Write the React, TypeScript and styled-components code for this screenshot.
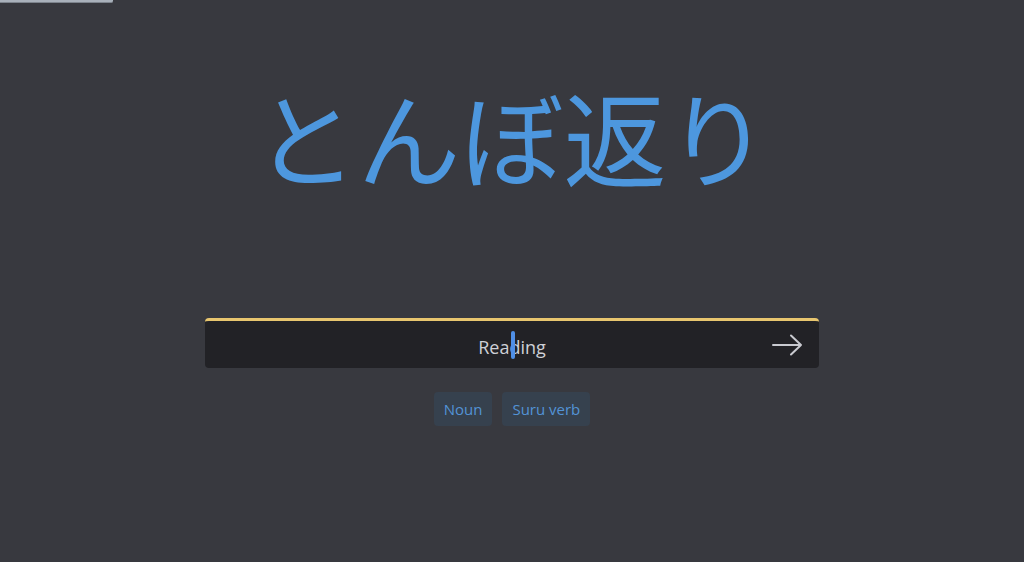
import React, { FC, ReactElement } from "react";
import styled, { createGlobalStyle } from "styled-components";

const GlobalStyle = createGlobalStyle`
  html, body {
    margin: 0;
    padding: 0;
    background: #38393f;
    height: 100%;
  }
  #root {
    min-height: 100%;
  }
`;

const tags = ["Noun", "Suru verb"];

const ArrowIcon: FC = (): ReactElement => (
  <svg width="31" height="22" viewBox="0 0 31 22" fill="none">
    <path
      d="M1 11H29M19 1.5L29 11L19 20.5"
      stroke="#c9cad0"
      strokeWidth="2"
      strokeLinecap="round"
      strokeLinejoin="round"
    />
  </svg>
);

export default function App(): ReactElement {
  return (
    <StyledPage>
      <GlobalStyle />
      <StyledProgress>
        <StyledProgressFill style={{ width: "11%" }} />
      </StyledProgress>
      <StyledMain>
        <StyledWord lang="ja">とんぼ返り</StyledWord>
        <StyledAnswer>
          <StyledInput placeholder="Reading" readOnly />
          <StyledCaret />
          <StyledSubmit aria-label="Submit">
            <ArrowIcon />
          </StyledSubmit>
        </StyledAnswer>
        <StyledTags>
          {tags.map((tag) => (
            <StyledTag key={tag}>{tag}</StyledTag>
          ))}
        </StyledTags>
      </StyledMain>
    </StyledPage>
  );
}

const StyledPage = styled.div`
  min-height: 562px;
  background: #38393f;
  display: flex;
  flex-direction: column;
`;

const StyledProgress = styled.div`
  height: 3px;
  width: 100%;
`;

const StyledProgressFill = styled.div`
  height: 2px;
  background: #a9b1bb;
  border-bottom: 1px solid #7d848d;
  border-radius: 0 0 2px 0;
`;

const StyledMain = styled.main`
  display: flex;
  flex-direction: column;
  align-items: center;
  padding-top: 81px;
`;

const StyledWord = styled.h1`
  margin: 0;
  font-family: "Noto Sans CJK JP", "Noto Sans", sans-serif;
  font-size: 103px;
  line-height: 1;
  font-weight: 400;
  color: #4d97de;
  letter-spacing: 0;
`;

const StyledAnswer = styled.div`
  position: relative;
  margin-top: 131px;
  width: 614px;
  height: 50px;
  box-sizing: border-box;
  border-top: 3px solid #e8c66f;
  border-radius: 4px;
  background: #222226;
  display: flex;
  align-items: center;
`;

const StyledInput = styled.input`
  flex: 1;
  height: 100%;
  box-sizing: border-box;
  background: transparent;
  border: none;
  outline: none;
  text-align: center;
  font-family: "Open Sans", "Noto Sans", sans-serif;
  font-size: 18px;
  color: #d6d7dc;
  padding: 4px 60px 0;

  &::placeholder {
    color: #cfd0d6;
    opacity: 1;
  }
`;

const StyledCaret = styled.span`
  position: absolute;
  left: 306px;
  top: 10px;
  width: 4px;
  height: 28px;
  border-radius: 2px;
  background: #4f8fe6;
  pointer-events: none;
`;

const StyledSubmit = styled.button`
  position: absolute;
  right: 16px;
  top: 50%;
  transform: translateY(-50%);
  display: flex;
  align-items: center;
  justify-content: center;
  padding: 0;
  background: none;
  border: none;
  cursor: pointer;
`;

const StyledTags = styled.div`
  display: flex;
  gap: 10px;
  margin-top: 24px;
`;

const StyledTag = styled.span`
  display: flex;
  align-items: center;
  height: 34px;
  padding: 0 10px;
  border-radius: 4px;
  background: #36414e;
  color: #5393d6;
  font-family: "Open Sans", "Noto Sans", sans-serif;
  font-size: 15px;
`;
